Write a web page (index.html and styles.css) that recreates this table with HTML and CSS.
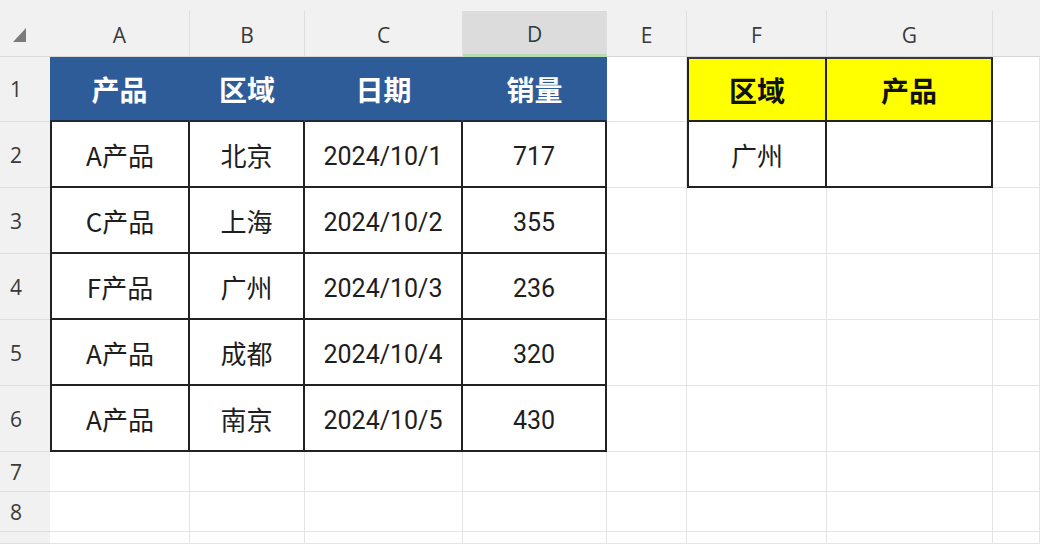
FILE: index.html
```html
<!DOCTYPE html>
<html lang="zh-CN">
<head>
<meta charset="utf-8">
<title>Sheet</title>
<link rel="stylesheet" href="styles.css">
</head>
<body>
<div class="sheet">
  <div class="strip"></div>

  <div class="corner"><svg width="50" height="46" viewBox="0 0 50 46"><polygon points="26,17 26,31 13,31" fill="#7b7b7b"/></svg></div>
  <div class="ch">A</div>
  <div class="ch">B</div>
  <div class="ch">C</div>
  <div class="ch sel">D</div>
  <div class="ch">E</div>
  <div class="ch">F</div>
  <div class="ch">G</div>
  <div class="ch last"></div>

  <div class="rh">1</div>
  <div class="c th first">产品</div>
  <div class="c th">区域</div>
  <div class="c th">日期</div>
  <div class="c th">销量</div>
  <div class="c"></div>
  <div class="c yh first">区域</div>
  <div class="c yh">产品</div>
  <div class="c"></div>

  <div class="rh">2</div>
  <div class="c t first cj">A产品</div>
  <div class="c t cj">北京</div>
  <div class="c t num">2024/10/1</div>
  <div class="c t num">717</div>
  <div class="c"></div>
  <div class="c t first cj">广州</div>
  <div class="c t"></div>
  <div class="c"></div>

  <div class="rh">3</div>
  <div class="c t first cj">C产品</div>
  <div class="c t cj">上海</div>
  <div class="c t num">2024/10/2</div>
  <div class="c t num">355</div>
  <div class="c"></div>
  <div class="c"></div>
  <div class="c"></div>
  <div class="c"></div>

  <div class="rh">4</div>
  <div class="c t first cj">F产品</div>
  <div class="c t cj">广州</div>
  <div class="c t num">2024/10/3</div>
  <div class="c t num">236</div>
  <div class="c"></div>
  <div class="c"></div>
  <div class="c"></div>
  <div class="c"></div>

  <div class="rh">5</div>
  <div class="c t first cj">A产品</div>
  <div class="c t cj">成都</div>
  <div class="c t num">2024/10/4</div>
  <div class="c t num">320</div>
  <div class="c"></div>
  <div class="c"></div>
  <div class="c"></div>
  <div class="c"></div>

  <div class="rh">6</div>
  <div class="c t first cj">A产品</div>
  <div class="c t cj">南京</div>
  <div class="c t num">2024/10/5</div>
  <div class="c t num">430</div>
  <div class="c"></div>
  <div class="c"></div>
  <div class="c"></div>
  <div class="c"></div>

  <div class="rh">7</div>
  <div class="c"></div><div class="c"></div><div class="c"></div><div class="c"></div>
  <div class="c"></div><div class="c"></div><div class="c"></div><div class="c"></div>

  <div class="rh">8</div>
  <div class="c"></div><div class="c"></div><div class="c"></div><div class="c"></div>
  <div class="c"></div><div class="c"></div><div class="c"></div><div class="c"></div>

  <div class="rh"></div>
  <div class="c"></div><div class="c"></div><div class="c"></div><div class="c"></div>
  <div class="c"></div><div class="c"></div><div class="c"></div><div class="c"></div>
</div>
</body>
</html>
```

FILE: styles.css
```css
* { box-sizing: border-box; }
html, body {
  margin: 0;
  padding: 0;
  background: #ffffff;
  width: 1040px;
  height: 544px;
  overflow: hidden;
}
.sheet {
  display: grid;
  grid-template-columns: 50px 140px 115px 158px 144px 80px 140px 166px 47px;
  grid-template-rows: 11px 46px 65px 66px 66px 66px 66px 66px 40px 40px 12px;
  width: 1040px;
  height: 544px;
  font-family: "Noto Sans CJK SC", sans-serif;
}
.strip {
  grid-column: 1 / -1;
  background: #f1f1f1;
}
.corner {
  background: #f1f1f1;
  border-bottom: 1px solid #dadada;
}
.corner svg { display: block; }
.ch {
  background: #f1f1f1;
  border-right: 1px solid #dedede;
  border-bottom: 1px solid #d6d6d6;
  display: flex;
  align-items: center;
  justify-content: center;
  font-family: "Open Sans", sans-serif;
  font-size: 21px;
  color: #3a3a3a;
  padding-top: 2px;
}
.ch.last { border-right: none; }
.ch.sel {
  background: #dcdcdc;
  border-bottom: 3px solid #b5ddb0;
  color: #2c3a3a;
}
.rh {
  background: #f1f1f1;
  border-bottom: 1px solid #dedede;
  display: flex;
  align-items: center;
  justify-content: center;
  font-family: "Open Sans", sans-serif;
  font-size: 21px;
  color: #3a3a3a;
  padding-right: 18px;
}
.c {
  border-right: 1px solid #e4e4e4;
  border-bottom: 1px solid #e4e4e4;
  display: flex;
  align-items: center;
  justify-content: center;
  color: #1e1e1e;
}
.th {
  background: #2e5c98;
  color: #ffffff;
  font-weight: 700;
  font-size: 28px;
  border-right: 1px solid #2e5c98;
  border-bottom: 2px solid #1e2a3a;
}
.yh {
  background: #ffff00;
  color: #111111;
  font-weight: 700;
  font-size: 28px;
  border-top: 2px solid #3a3a3a;
  border-right: 2px solid #222222;
  border-bottom: 2px solid #222222;
}
.t {
  border-right: 2px solid #222222;
  border-bottom: 2px solid #222222;
}
.first { border-left: 2px solid #222222; }
.th.first { border-left: none; }
.cj {
  font-size: 26px;
  font-family: "Noto Sans CJK SC", sans-serif;
}
.num {
  font-size: 25px;
  font-family: Roboto, "Noto Sans CJK SC", sans-serif;
  padding-top: 5px;
}
```
